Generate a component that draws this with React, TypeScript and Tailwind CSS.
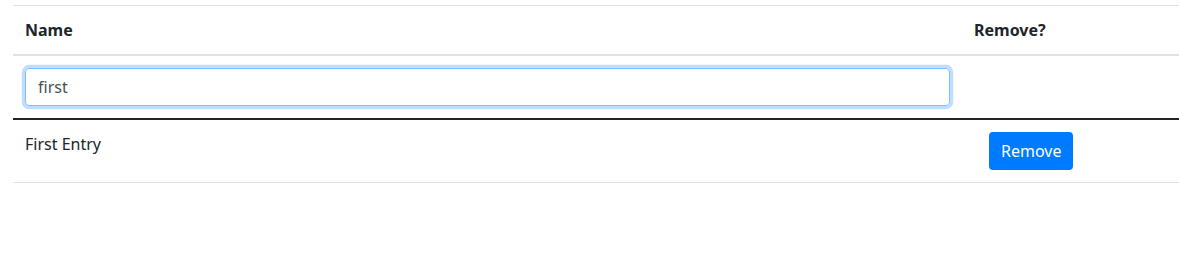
import React from "react";

export default function App() {
  return (
    <div className="w-[1179px] h-[262px] bg-white pt-[5px] pl-[13px] text-[16px] leading-[24px] text-[#212529]" style={{ fontFamily: '"Segoe UI", "Noto Sans", sans-serif' }}>
      <table className="w-full border-collapse">
        <thead>
          <tr className="border-t border-[#dee2e6]">
            <th className="text-left font-bold px-[12px] pt-[12px] pb-[12px] border-b-2 border-[#dee2e6] align-bottom">Name</th>
            <th className="text-left font-bold px-[12px] pt-[12px] pb-[12px] border-b-2 border-[#dee2e6] align-bottom w-[217px]">Remove?</th>
          </tr>
        </thead>
        <tbody>
          <tr className="border-b-2 border-[#212529]">
            <td className="p-[12px] align-top">
              <input
                defaultValue="first"
                className="block w-full h-[38px] px-[12px] py-[6px] rounded-[4px] border border-[#80bdff] text-[#495057] text-[16px] outline-none shadow-[0_0_0_3.2px_rgba(0,123,255,0.25)]"
                style={{ fontFamily: '"Segoe UI", "Noto Sans", sans-serif' }}
              />
            </td>
            <td className="p-[12px] align-top"></td>
          </tr>
          <tr className="border-b border-[#dee2e6]">
            <td className="p-[12px] align-top">First Entry</td>
            <td className="p-[12px] align-top">
              <button className="ml-[15px] h-[38px] px-[12px] py-[6px] rounded-[4px] bg-[#007bff] text-white text-[16px] leading-[24px]">Remove</button>
            </td>
          </tr>
        </tbody>
      </table>
    </div>
  );
}
